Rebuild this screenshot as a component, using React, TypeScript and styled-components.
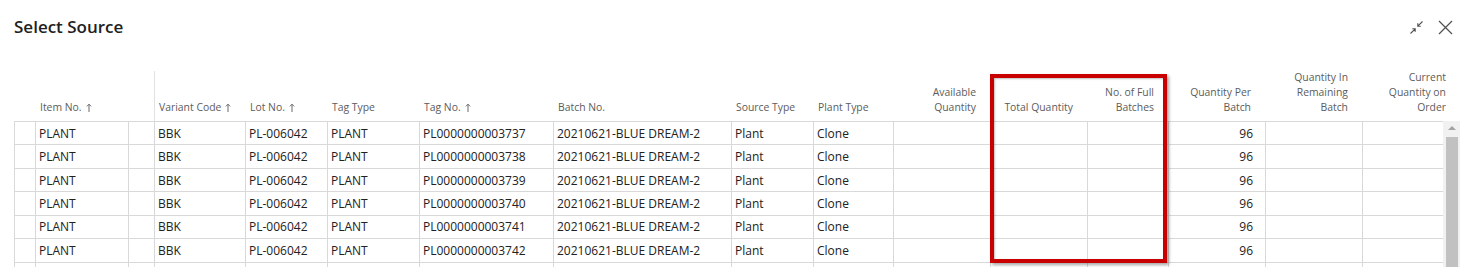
import React from "react";
import styled, { createGlobalStyle } from "styled-components";

const GlobalStyle = createGlobalStyle`
  html, body { margin: 0; padding: 0; background: #ffffff; }
  body { font-family: "Open Sans", "Noto Sans", sans-serif; }
  * { box-sizing: border-box; }
`;

type Align = "left" | "right";

interface Col {
  key: string;
  width: number;
  header: string[];
  align: Align;
  sort?: boolean;
  divider?: boolean;
}

const cols: Col[] = [
  { key: "sel", width: 21, header: [], align: "left" },
  { key: "item", width: 93, header: ["Item No."], align: "left", sort: true },
  { key: "blank", width: 26, header: [], align: "left" },
  { key: "variant", width: 91, header: ["Variant Code"], align: "left", sort: true, divider: true },
  { key: "lot", width: 82, header: ["Lot No."], align: "left", sort: true },
  { key: "tagType", width: 92, header: ["Tag Type"], align: "left" },
  { key: "tagNo", width: 134, header: ["Tag No."], align: "left", sort: true },
  { key: "batch", width: 178, header: ["Batch No."], align: "left" },
  { key: "source", width: 82, header: ["Source Type"], align: "left" },
  { key: "plant", width: 80, header: ["Plant Type"], align: "left" },
  { key: "avail", width: 97, header: ["Available", "Quantity"], align: "right" },
  { key: "total", width: 97, header: ["Total Quantity"], align: "right" },
  { key: "full", width: 81, header: ["No. of Full", "Batches"], align: "right" },
  { key: "perBatch", width: 97, header: ["Quantity Per", "Batch"], align: "right" },
  { key: "remain", width: 97, header: ["Quantity In", "Remaining", "Batch"], align: "right" },
  { key: "current", width: 81, header: ["Current", "Quantity on", "Order"], align: "right" },
];

const SCROLL_W = 17;

const makeRow = (n: number): Record<string, string> => ({
  sel: "",
  item: "PLANT",
  blank: "",
  variant: "BBK",
  lot: "PL-006042",
  tagType: "PLANT",
  tagNo: `PL000000000${n}`,
  batch: "20210621-BLUE DREAM-2",
  source: "Plant",
  plant: "Clone",
  avail: "",
  total: "",
  full: "",
  perBatch: "96",
  remain: "",
  current: "",
});

const rows: Record<string, string>[] = [
  ...[3737, 3738, 3739, 3740, 3741, 3742].map(makeRow),
  {},
];

const Page = styled.div`
  position: relative;
  width: 1480px;
  height: 267px;
  overflow: hidden;
`;

const TitleBar = styled.div`
  height: 54px;
  display: flex;
  align-items: center;
  justify-content: space-between;
  padding: 0 27px 2px 14px;
`;

const Title = styled.h1`
  margin: 0;
  font-size: 17px;
  font-weight: 600;
  color: #212121;
`;

const Actions = styled.div`
  display: flex;
  align-items: center;
  gap: 14px;
  color: #505050;
  padding-top: 2px;
`;

const IconButton = styled.span`
  display: flex;
  width: 15px;
  height: 15px;
`;

const Grid = styled.div`
  margin: 17px 0 0 14px;
  width: ${1429 + SCROLL_W}px;
`;

const HeaderRow = styled.div`
  display: flex;
  height: 50px;
`;

const HeaderCell = styled.div<{ $w: number; $align: Align; $divider?: boolean }>`
  width: ${(p) => p.$w}px;
  flex: none;
  display: flex;
  flex-direction: column;
  justify-content: flex-end;
  align-items: ${(p) => (p.$align === "right" ? "flex-end" : "flex-start")};
  text-align: ${(p) => p.$align};
  border-left: 1px solid ${(p) => (p.$divider ? "#e1e1e1" : "transparent")};
  padding: 0 14px 6px 4px;
  font-size: 10.4px;
  line-height: 15px;
  color: #5c5c5c;
  white-space: nowrap;
`;

const HeaderLine = styled.span`
  display: flex;
  align-items: center;
`;

const SortArrow = styled.svg`
  margin-left: 4px;
  width: 6px;
  height: 9px;
  flex: none;
`;

const Body = styled.div`
  display: flex;
`;

const Rows = styled.div`
  width: 1429px;
  border-top: 1px solid #d9d9d9;
`;

const Row = styled.div`
  display: flex;
  height: 23.45px;
  border-bottom: 1px solid #d9d9d9;
`;

const Cell = styled.div<{ $w: number; $align: Align }>`
  width: ${(p) => p.$w}px;
  flex: none;
  display: flex;
  align-items: center;
  justify-content: ${(p) => (p.$align === "right" ? "flex-end" : "flex-start")};
  border-left: 1px solid #d9d9d9;
  padding: 0 12px 0 3px;
  font-size: 12px;
  color: #212121;
  white-space: nowrap;
  overflow: hidden;
`;

const Scrollbar = styled.div`
  width: ${SCROLL_W}px;
  background: #f1f1f1;
  display: flex;
  flex-direction: column;
  align-items: center;
  padding-top: 5px;
`;

const ScrollArrow = styled.div`
  width: 0;
  height: 0;
  border-left: 4px solid transparent;
  border-right: 4px solid transparent;
  border-bottom: 4px solid #a3a3a3;
`;

const Thumb = styled.div`
  margin-top: 7px;
  width: 12px;
  height: 200px;
  background: #c1c1c1;
`;

const Highlight = styled.div`
  position: absolute;
  left: 990px;
  top: 74px;
  width: 177px;
  height: 189px;
  border: 4.6px solid #c80000;
  box-shadow: 2px 2px 3px rgba(0, 0, 0, 0.35), inset 1px 1px 2px rgba(0, 0, 0, 0.25);
  pointer-events: none;
`;

const Arrow = () => (
  <SortArrow viewBox="0 0 6 9" fill="none" stroke="#6a6a6a" strokeWidth="1">
    <path d="M3 1.2V9M0.9 3.4L3 1.2L5.1 3.4" />
  </SortArrow>
);

const CollapseIcon = () => (
  <svg width="15" height="15" viewBox="0 0 15 15" fill="none" stroke="#505050" strokeWidth="1.1">
    <path d="M13.5 1.5L8.8 6.2M8.8 3.3V6.2H11.7" />
    <path d="M1.5 13.5L6.2 8.8M3.3 8.8H6.2V11.7" />
  </svg>
);

const CloseIcon = () => (
  <svg width="15" height="15" viewBox="0 0 15 15" fill="none" stroke="#505050" strokeWidth="1.2">
    <path d="M1 1L14 14M14 1L1 14" />
  </svg>
);

export default function App() {
  return (
    <Page>
      <GlobalStyle />
      <TitleBar>
        <Title>Select Source</Title>
        <Actions>
          <IconButton>
            <CollapseIcon />
          </IconButton>
          <IconButton>
            <CloseIcon />
          </IconButton>
        </Actions>
      </TitleBar>
      <Grid>
        <HeaderRow>
          {cols.map((c, i) => (
            <HeaderCell
              key={c.key}
              $w={i === cols.length - 1 ? c.width + SCROLL_W : c.width}
              $align={c.align}
              $divider={c.divider}
            >
              {c.header.map((line, li) => (
                <HeaderLine key={li}>
                  {line}
                  {c.sort && li === c.header.length - 1 ? <Arrow /> : null}
                </HeaderLine>
              ))}
            </HeaderCell>
          ))}
        </HeaderRow>
        <Body>
          <Rows>
            {rows.map((r, ri) => (
              <Row key={ri}>
                {cols.map((c) => (
                  <Cell key={c.key} $w={c.width} $align={c.align}>
                    {r[c.key] ?? ""}
                  </Cell>
                ))}
              </Row>
            ))}
          </Rows>
          <Scrollbar>
            <ScrollArrow />
            <Thumb />
          </Scrollbar>
        </Body>
      </Grid>
      <Highlight />
    </Page>
  );
}
